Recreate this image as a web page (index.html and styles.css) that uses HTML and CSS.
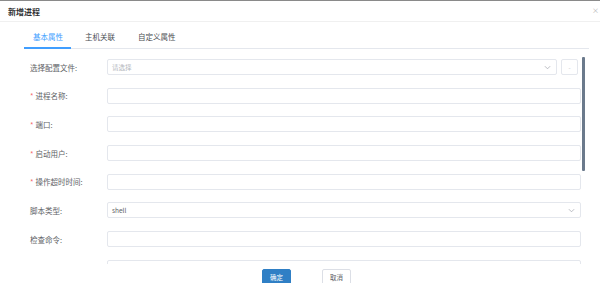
FILE: index.html
```html
<!DOCTYPE html>
<html>
<head>
<meta charset="utf-8">
<link rel="stylesheet" href="styles.css">
</head>
<body>
<div class="dialog">
  <header class="hd">
    <span class="title">新增进程</span>
    <span class="close">×</span>
  </header>
  <nav class="tabs">
    <span class="tab active">基本属性</span>
    <span class="tab">主机关联</span>
    <span class="tab">自定义属性</span>
  </nav>
  <div class="body">
    <div class="form">
      <div class="row">
        <label class="lbl">选择配置文件:</label>
        <div class="ctrl sel">
          <div class="select"><span class="ph">请选择</span><svg class="arrow" viewBox="0 0 8 5" width="7" height="5"><path d="M1 1l3 3 3-3" fill="none" stroke="#a8abb2" stroke-width="0.9"/></svg></div>
          <div class="mini">-</div>
        </div>
      </div>
      <div class="row">
        <label class="lbl"><i>*</i>进程名称:</label>
        <div class="ctrl"><div class="input"></div></div>
      </div>
      <div class="row">
        <label class="lbl"><i>*</i>端口:</label>
        <div class="ctrl"><div class="input"></div></div>
      </div>
      <div class="row">
        <label class="lbl"><i>*</i>启动用户:</label>
        <div class="ctrl"><div class="input"></div></div>
      </div>
      <div class="row">
        <label class="lbl"><i>*</i>操作超时时间:</label>
        <div class="ctrl"><div class="input"></div></div>
      </div>
      <div class="row">
        <label class="lbl">脚本类型:</label>
        <div class="ctrl"><div class="select full"><span class="val">shell</span><svg class="arrow" viewBox="0 0 8 5" width="7" height="5"><path d="M1 1l3 3 3-3" fill="none" stroke="#a8abb2" stroke-width="0.9"/></svg></div></div>
      </div>
      <div class="row">
        <label class="lbl">检查命令:</label>
        <div class="ctrl"><div class="input"></div></div>
      </div>
      <div class="row">
        <span class="lbl"></span>
        <div class="ctrl"><div class="input"></div></div>
      </div>
    </div>
    <div class="thumb"></div>
  </div>
  <footer class="ft">
    <button class="btn primary">确定</button>
    <button class="btn">取消</button>
  </footer>
</div>
</body>
</html>
```
FILE: styles.css
```css
html, body {
  margin: 0;
  padding: 0;
  background: #fff;
}
body {
  font-family: "Noto Sans CJK SC", "Liberation Sans", sans-serif;
  color: #606266;
  width: 600px;
  height: 283px;
  overflow: hidden;
}
.dialog {
  display: flex;
  flex-direction: column;
  height: 283px;
  border-top: 1px solid #8a8a8a;
  box-sizing: border-box;
}
.hd {
  height: 21px;
  flex: none;
  display: flex;
  align-items: center;
  justify-content: space-between;
  padding: 0 0 0 8px;
  border-bottom: 1px solid #f0f0f0;
  box-sizing: border-box;
}
.title {
  font-size: 8px;
  font-weight: bold;
  color: #303133;
}
.close {
  font-size: 7px;
  color: #b0b0b0;
  margin-right: 1px;
  margin-top: -2px;
}
.tabs {
  flex: none;
  display: flex;
  margin: 0 11px 0 24px;
  height: 27px;
  box-sizing: border-box;
  border-bottom: 1px solid #e4e7ed;
  align-items: flex-end;
}
.tab {
  font-size: 7.5px;
  color: #4a4d52;
  padding: 0 8px 4px;
  margin-right: 7px;
  line-height: 12px;
  border-bottom: 2px solid transparent;
  margin-bottom: -1px;
}
.tab.active {
  color: #409eff;
  border-bottom-color: #409eff;
  padding: 0 8px 4px 9px;
  margin-right: 6px;
}
.body {
  flex: 1;
  position: relative;
  overflow: hidden;
}
.form {
  padding: 10px 19px 0 30px;
}
.row {
  display: flex;
  align-items: center;
  height: 16px;
  margin-bottom: 12.7px;
}
.lbl {
  width: 77px;
  flex: none;
  font-size: 7.5px;
  color: #606266;
  white-space: nowrap;
}
.lbl i {
  font-style: normal;
  color: #f56c6c;
  margin-right: 2px;
}
.ctrl {
  flex: 1;
  display: flex;
  gap: 4px;
  height: 16px;
}
.ctrl.sel {
  margin-right: 3px;
}
.input, .select, .mini {
  height: 16px;
  box-sizing: border-box;
  border: 1px solid #e4e7ed;
  border-radius: 2px;
  background: #fff;
}
.input {
  flex: 1;
}
.select {
  flex: 1;
  display: flex;
  align-items: center;
  justify-content: space-between;
  padding: 0 5px 0 4px;
}
.mini {
  width: 17px;
  flex: none;
  display: flex;
  align-items: center;
  justify-content: center;
  font-size: 6px;
  color: #c0c4cc;
}
.ph {
  font-size: 6.5px;
  color: #b4b7bd;
}
.val {
  font-size: 6.5px;
  color: #606266;
}
.arrow {
  display: block;
}
.thumb {
  position: absolute;
  left: 582px;
  top: 8px;
  width: 3px;
  height: 114px;
  background: #6b7a8c;
  border-radius: 1px;
}
.ft {
  flex: none;
  height: 19px;
  display: flex;
  justify-content: center;
  align-items: flex-start;
  gap: 31px;
  padding-top: 5px;
  box-sizing: border-box;
  padding-left: 13px;
  background: #fff;
}
.btn {
  width: 29px;
  height: 16px;
  font-family: inherit;
  font-size: 6.5px;
  border: 1px solid #dcdfe6;
  border-radius: 2px;
  background: #fff;
  color: #606266;
  padding: 0;
  flex: none;
}
.btn.primary {
  background: #2f7fc5;
  border-color: #2f7fc5;
  color: #fff;
}
```
